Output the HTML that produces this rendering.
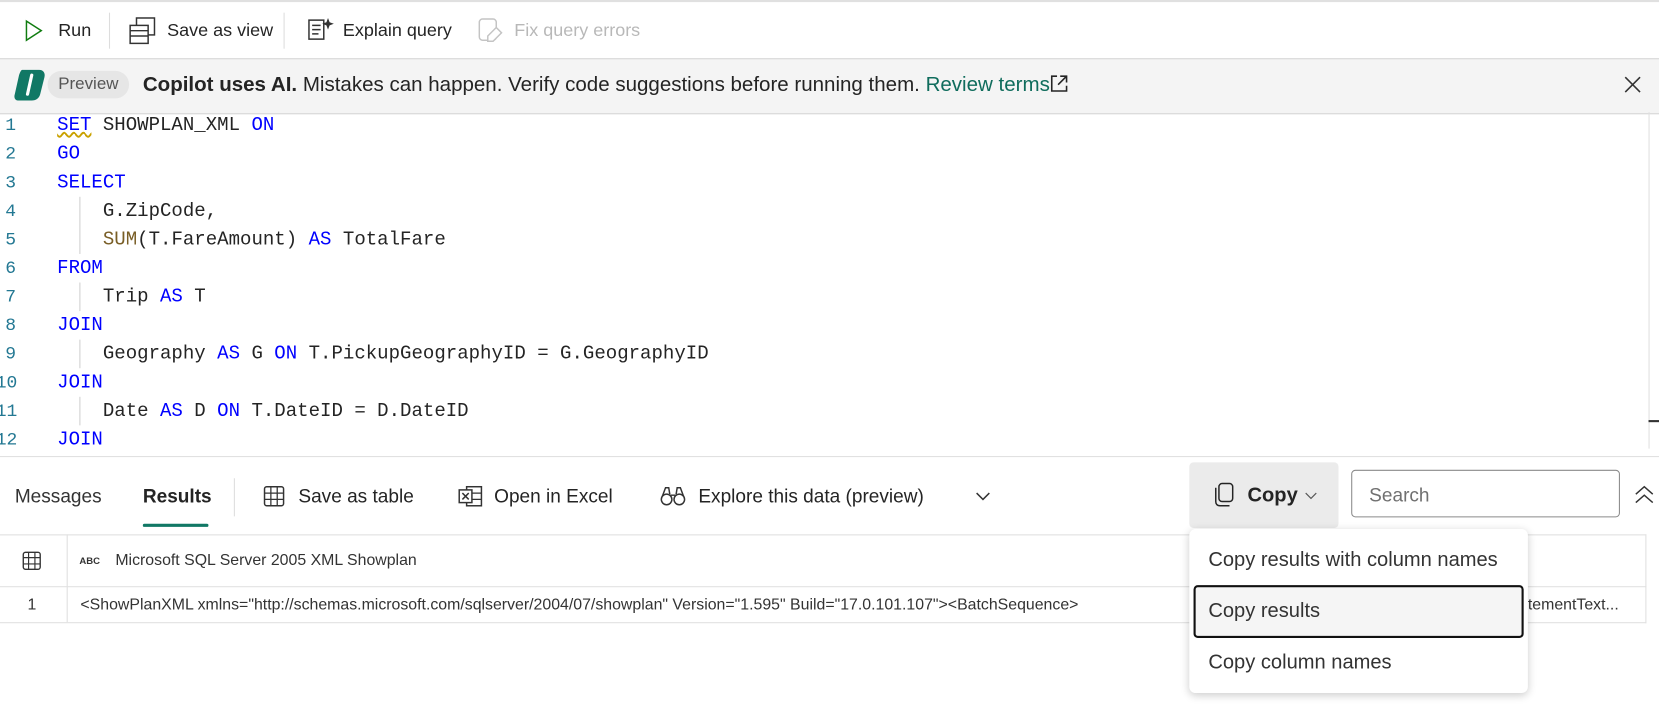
<!DOCTYPE html>
<html><head><meta charset="utf-8"><style>
html,body{margin:0;padding:0;width:1659px;height:703px;overflow:hidden;background:#fff}
#w{position:absolute;left:0;top:0;width:1568px;height:665px;transform:scale(1.0581);transform-origin:0 0;font-family:"Liberation Sans",sans-serif;color:#242424}
.a{position:absolute;white-space:nowrap}
.t{font-size:17px;top:19px}
.mono{font-family:"Liberation Mono",monospace;font-size:18px}
.ln{color:#237893;font-family:"Liberation Mono",monospace;font-size:16px}
.k{color:#0000ff}
.f{color:#795e26}
.ig{position:absolute;left:75px;width:1px;background:#d0d0d0}
</style></head><body><div id="w">
<div class="a" style="left:0;top:0;width:1568px;height:2px;background:#e0e0e0"></div>
<!-- toolbar -->
<svg class="a" style="left:22px;top:18px" width="20" height="22"><path d="M3 2 L17 11 L3 20 Z" fill="none" stroke="#107c10" stroke-width="1.4"/></svg>
<div class="a t" style="left:55px">Run</div>
<div class="a" style="left:103px;top:12px;width:1px;height:34px;background:#ddd"></div>
<svg class="a" style="left:121px;top:15px" width="28" height="28"><rect x="8" y="2" width="17" height="16" fill="none" stroke="#333" stroke-width="1.4"/><rect x="2" y="9" width="17" height="17" fill="#fff" stroke="#333" stroke-width="1.4"/><path d="M2 14h17M2 19h17" stroke="#333" stroke-width="1.4"/></svg>
<div class="a t" style="left:158px">Save as view</div>
<div class="a" style="left:268px;top:12px;width:1px;height:34px;background:#ddd"></div>
<svg class="a" style="left:289px;top:15px" width="28" height="28"><path d="M3 4h14v18H3z" fill="none" stroke="#333" stroke-width="1.4"/><path d="M6 9h8M6 13h8M6 17h6" stroke="#333" stroke-width="1.4"/><path d="M21 2l1.5 4 4 1.5-4 1.5-1.5 4-1.5-4-4-1.5 4-1.5z" fill="#333"/></svg>
<div class="a t" style="left:324px">Explain query</div>
<svg class="a" style="left:451px;top:16px" width="26" height="26"><rect x="2" y="2" width="16" height="20" rx="3" fill="none" stroke="#c4c4c4" stroke-width="1.4"/><path d="M10 18l8-8 5 5-8 8h-5z" fill="#fff" stroke="#c4c4c4" stroke-width="1.4"/></svg>
<div class="a t" style="left:486px;color:#b8b8b8">Fix query errors</div>
<!-- copilot bar -->
<div class="a" style="left:0;top:55px;width:1568px;height:51px;background:#f4f4f4;border-top:1px solid #d6d6d6;border-bottom:1px solid #d6d6d6"></div>
<svg class="a" style="left:13px;top:64px" width="30" height="32"><path d="M8 2h16c4 0 6 3 5 7l-4 16c-1 4-4 6-8 6H4c-3 0-4-3-3-6L5 7c1-3 2-5 3-5z" fill="#117865"/><path d="M17 7l-4 18" stroke="#fff" stroke-width="3" stroke-linecap="round"/></svg>
<div class="a" style="left:45px;top:67px;width:77px;height:26px;border-radius:13px;background:#e6e6e6;font-size:16px;color:#555;text-align:center;line-height:26px">Preview</div>
<div class="a" style="left:135px;top:69px;font-size:19.4px"><b>Copilot uses AI.</b> Mistakes can happen. Verify code suggestions before running them. <span style="color:#0f6c5c">Review terms</span><svg width="20" height="18" style="vertical-align:-2px"><path d="M7 2H2v14h14v-5M10 2h6v6M16 2L8 10" fill="none" stroke="#242424" stroke-width="1.5"/></svg></div>
<svg class="a" style="left:1535px;top:72px" width="16" height="16"><path d="M1 1l14 14M15 1L1 15" stroke="#333" stroke-width="1.5"/></svg>
<!-- editor -->
<div class="ig" style="top:186px;height:54px"></div>
<div class="ig" style="top:267px;height:27px"></div>
<div class="ig" style="top:321px;height:27px"></div>
<div class="ig" style="top:375px;height:27px"></div>
<div class="a" style="left:1558px;top:106px;width:1px;height:325px;background:#e0e0e0"></div>
<div class="a" style="left:1558px;top:397px;width:10px;height:2px;background:#333"></div>
<div class="a" style="left:0;top:106px;line-height:27px">
<div class="ln" style="position:absolute;left:5px;top:0;line-height:27px;font-size:17px">1<br>2<br>3<br>4<br>5<br>6<br>7<br>8<br>9<br><span style="margin-left:-9px">10</span><br><span style="margin-left:-9px">11</span><br><span style="margin-left:-9px">12</span></div>
<div class="mono" style="position:absolute;left:54px;top:0;line-height:27px;white-space:pre"><span class="k" style="text-decoration:underline wavy #c9a100">SET</span> SHOWPLAN_XML <span class="k">ON</span>
<span class="k">GO</span>
<span class="k">SELECT</span>
    G.ZipCode,
    <span class="f">SUM</span>(T.FareAmount) <span class="k">AS</span> TotalFare
<span class="k">FROM</span>
    Trip <span class="k">AS</span> T
<span class="k">JOIN</span>
    Geography <span class="k">AS</span> G <span class="k">ON</span> T.PickupGeographyID = G.GeographyID
<span class="k">JOIN</span>
    Date <span class="k">AS</span> D <span class="k">ON</span> T.DateID = D.DateID
<span class="k">JOIN</span></div>
</div>
<div class="a" style="left:0;top:424px;width:1568px;height:241px;background:#fff"></div>
<div class="a" style="left:0;top:431px;width:1568px;height:1px;background:#e0e0e0"></div>
<!-- results toolbar -->
<div class="a" style="left:14px;top:459px;font-size:18px;color:#333">Messages</div>
<div class="a" style="left:135px;top:459px;font-size:18px;font-weight:bold">Results</div>
<div class="a" style="left:135px;top:495px;width:62px;height:3px;border-radius:2px;background:#117865"></div>
<div class="a" style="left:221px;top:452px;width:1px;height:36px;background:#ddd"></div>
<svg class="a" style="left:248px;top:458px" width="22" height="22"><rect x="2" y="2" width="18" height="18" rx="2" fill="none" stroke="#333" stroke-width="1.4"/><path d="M2 8h18M2 14h18M8 2v18M14 2v18" stroke="#333" stroke-width="1.2"/></svg>
<div class="a" style="left:282px;top:459px;font-size:18px">Save as table</div>
<svg class="a" style="left:433px;top:457px" width="24" height="24"><rect x="8" y="3" width="14" height="18" fill="none" stroke="#333" stroke-width="1.4"/><rect x="1" y="6" width="12" height="12" fill="#fff" stroke="#333" stroke-width="1.4"/><path d="M4 9l6 6M10 9l-6 6" stroke="#333" stroke-width="1.4"/><path d="M13 9h9M13 15h9" stroke="#333" stroke-width="1.2"/></svg>
<div class="a" style="left:467px;top:459px;font-size:18px">Open in Excel</div>
<svg class="a" style="left:623px;top:457px" width="26" height="24"><circle cx="7" cy="15" r="5" fill="none" stroke="#333" stroke-width="1.4"/><circle cx="19" cy="15" r="5" fill="none" stroke="#333" stroke-width="1.4"/><path d="M3 12l3-8h3l1 6M23 12l-3-8h-3l-1 6M10 11h6" fill="none" stroke="#333" stroke-width="1.4"/></svg>
<div class="a" style="left:660px;top:459px;font-size:18px">Explore this data (preview)</div>
<svg class="a" style="left:921px;top:463px" width="16" height="12"><path d="M2 3l6 6 6-6" fill="none" stroke="#333" stroke-width="1.4"/></svg>
<div class="a" style="left:1124px;top:437px;width:141px;height:62px;background:#ebebeb;border-radius:4px"></div>
<svg class="a" style="left:1147px;top:456px" width="20" height="24"><rect x="5" y="1" width="13" height="17" rx="3" fill="none" stroke="#242424" stroke-width="1.4"/><path d="M2 5v13c0 2 1 4 4 4h9" fill="none" stroke="#242424" stroke-width="1.4"/></svg>
<div class="a" style="left:1179px;top:458px;font-size:19px;font-weight:bold">Copy</div>
<svg class="a" style="left:1233px;top:465px" width="12" height="8"><path d="M1 1l5 5 5-5" fill="none" stroke="#555" stroke-width="1.1"/></svg>
<div class="a" style="left:1277px;top:444px;width:254px;height:45px;border:1px solid #8a8a8a;border-radius:4px;box-sizing:border-box"></div>
<div class="a" style="left:1294px;top:458px;font-size:18px;color:#707070">Search</div>
<svg class="a" style="left:1544px;top:458px" width="20" height="20"><path d="M2 9l8-7 8 7M2 17l8-7 8 7" fill="none" stroke="#333" stroke-width="1.4"/></svg>
<!-- grid -->
<div class="a" style="left:0;top:505px;width:1555px;height:48px;border-top:1px solid #e0e0e0;border-bottom:1px solid #e0e0e0;border-right:1px solid #e0e0e0"></div>
<div class="a" style="left:0;top:554px;width:1555px;height:34px;border-bottom:1px solid #e0e0e0;border-right:1px solid #e0e0e0"></div>
<div class="a" style="left:63px;top:505px;width:1px;height:83px;background:#e0e0e0"></div>
<svg class="a" style="left:21px;top:521px" width="18" height="18"><rect x="1" y="1" width="16" height="16" rx="2" fill="none" stroke="#333" stroke-width="1.3"/><path d="M1 6h16M1 12h16M6 1v16M12 1v16" stroke="#333" stroke-width="1.1"/></svg>
<div class="a" style="left:75px;top:525px;font-size:9px;font-weight:bold;color:#333">ABC</div>
<div class="a" style="left:109px;top:521px;font-size:15px;color:#333">Microsoft SQL Server 2005 XML Showplan</div>
<div class="a" style="left:26px;top:563px;font-size:15px;color:#333">1</div>
<div class="a" style="left:76px;top:563px;font-size:15px;color:#333">&lt;ShowPlanXML xmlns="http://schemas.microsoft.com/sqlserver/2004/07/showplan" Version="1.595" Build="17.0.101.107"&gt;&lt;BatchSequence&gt;</div>
<div class="a" style="left:1440px;top:563px;font-size:15px;color:#333;background:#fff;padding-left:4px">tementText...</div>
<!-- dropdown -->
<div class="a" style="left:1124px;top:500px;width:320px;height:155px;background:#fff;border-radius:6px;box-shadow:0 2px 8px rgba(0,0,0,.2)"></div>
<div class="a" style="left:1142px;top:519px;font-size:19px;color:#333">Copy results with column names</div>
<div class="a" style="left:1128px;top:553px;width:312px;height:50px;border:2px solid #111;border-radius:4px;box-sizing:border-box;background:#f5f5f5"></div>
<div class="a" style="left:1142px;top:567px;font-size:19px;color:#333">Copy results</div>
<div class="a" style="left:1142px;top:616px;font-size:19px;color:#333">Copy column names</div>
</div></body></html>
